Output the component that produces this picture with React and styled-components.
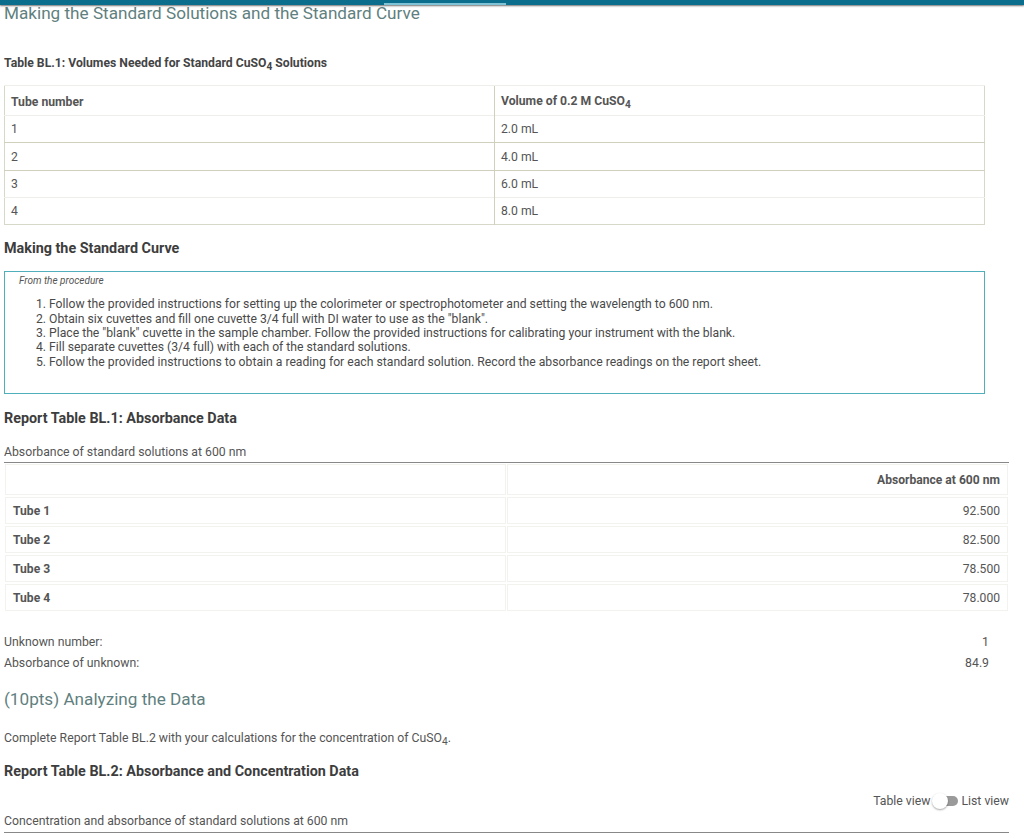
import styled, { createGlobalStyle } from "styled-components";

const GlobalStyle = createGlobalStyle`
  html, body {
    margin: 0;
    padding: 0;
    background: white;
    overflow: hidden;
  }
  body {
    font-family: Roboto, "Liberation Sans", sans-serif;
    font-size: 12px;
    color: #444;
  }
`;

const Page = styled.div`
  position: relative;
  width: 1024px;
  height: 840px;
  overflow: hidden;
  padding: 0 15px 0 4px;
  box-sizing: border-box;
`;

const TopBar = styled.div`
  position: absolute;
  top: 0;
  left: 0;
  width: 100%;
  height: 5px;
  background: #0b6e8c;
  box-shadow: 0 1px 2px rgba(0, 0, 0, 0.55);
`;

const Progress = styled.div`
  position: absolute;
  top: 3px;
  left: 384px;
  width: 122px;
  height: 2px;
  background: #7fc4d6;
`;

const SectionTitle = styled.h2`
  margin: 0;
  padding-top: ${(props) => props.$top}px;
  font-size: 17.15px;
  line-height: 24px;
  font-weight: 400;
  color: #5f7f80;
`;

const Caption = styled.p`
  margin: 30px 0 13px;
  font-size: 12.2px;
  line-height: 16px;
  font-weight: 700;
  color: #444;
`;

const Sub = styled.sub`
  font-size: 83%;
  line-height: 100%;
  vertical-align: -3px;
`;

const RefTable = styled.table`
  width: 981px;
  table-layout: fixed;
  border-collapse: collapse;
  border: 1px solid #d8d8c8;
`;

const RefCell = styled.td`
  height: ${(props) => (props.$header ? 30 : 27.25)}px;
  padding: ${(props) => (props.$header ? "2px" : "0")} 6px 0;
  box-sizing: border-box;
  font-size: 12.2px;
  font-weight: ${(props) => (props.$header ? 700 : 400)};
  color: #555;
  border-left: 1px solid #d0d0bc;
  border-top: 1px solid ${(props) => (props.$strong ? "#d0d0bc" : "#eeeeea")};
  &:first-child {
    width: 490px;
    border-left: none;
  }
`;

const Heading = styled.h3`
  margin: ${(props) => props.$top}px 0 0;
  font-size: 14.35px;
  line-height: 18px;
  font-weight: 700;
  color: #3d3d3d;
`;

const ProcedureBox = styled.div`
  width: 981px;
  height: 123px;
  margin-top: 13px;
  padding: 2px 14px 0;
  box-sizing: border-box;
  border: 1px solid #4fb0bb;
`;

const BoxLabel = styled.div`
  font-size: 10px;
  line-height: 14px;
  font-style: italic;
  color: #555;
`;

const Steps = styled.ol`
  margin: 9px 0 0;
  padding-left: 30px;
  font-size: 12.2px;
  line-height: 14.4px;
  color: #4a4a4a;
`;

const TableTitle = styled.div`
  margin-top: ${(props) => props.$top}px;
  padding-bottom: ${(props) => props.$bottom}px;
  font-size: 12.25px;
  line-height: 16px;
  color: #555;
  border-bottom: 1px solid #888;
`;

const DataTable = styled.table`
  width: 1005px;
  margin-top: -1px;
  table-layout: fixed;
  border-collapse: separate;
  border-spacing: 1px 2px;
`;

const DataCell = styled.td`
  height: ${(props) => (props.$header ? 31 : 27)}px;
  padding: 0 7px;
  box-sizing: border-box;
  font-size: 12.1px;
  font-weight: ${(props) => (props.$bold ? 700 : 400)};
  text-align: ${(props) => (props.$right ? "right" : "left")};
  color: #555;
  border: 1px solid #f2f2ee;
  &:first-child {
    width: 501px;
  }
`;

const InfoRow = styled.div`
  display: flex;
  justify-content: space-between;
  width: 985px;
  font-size: 12.25px;
  line-height: 21px;
  color: #555;
`;

const InfoList = styled.div`
  margin-top: 19px;
`;

const Intro = styled.p`
  margin: 19px 0 0;
  font-size: 12.25px;
  line-height: 16px;
  color: #555;
`;

const ViewToggle = styled.div`
  display: flex;
  justify-content: flex-end;
  align-items: center;
  height: 16px;
  margin-top: 12px;
  font-size: 12.25px;
  color: #555;
`;

const Track = styled.span`
  position: relative;
  display: inline-block;
  width: 22px;
  height: 10px;
  margin: 0 3px 0 6px;
  border-radius: 5px;
  background: #9a9a9a;
`;

const Knob = styled.span`
  position: absolute;
  top: -3px;
  left: -4px;
  width: 16px;
  height: 16px;
  border-radius: 50%;
  background: white;
  box-shadow: 0 1px 2px rgba(0, 0, 0, 0.35);
`;

const steps = [
  "Follow the provided instructions for setting up the colorimeter or spectrophotometer and setting the wavelength to 600 nm.",
  'Obtain six cuvettes and fill one cuvette 3/4 full with DI water to use as the "blank".',
  'Place the "blank" cuvette in the sample chamber. Follow the provided instructions for calibrating your instrument with the blank.',
  "Fill separate cuvettes (3/4 full) with each of the standard solutions.",
  "Follow the provided instructions to obtain a reading for each standard solution. Record the absorbance readings on the report sheet.",
];

const volumes = [
  ["1", "2.0 mL", false],
  ["2", "4.0 mL", true],
  ["3", "6.0 mL", true],
  ["4", "8.0 mL", false],
];

const readings = [
  ["Tube 1", "92.500"],
  ["Tube 2", "82.500"],
  ["Tube 3", "78.500"],
  ["Tube 4", "78.000"],
];

export default function App() {
  return (
    <Page>
      <GlobalStyle />
      <SectionTitle $top={1}>Making the Standard Solutions and the Standard Curve</SectionTitle>
      <Caption>
        Table BL.1: Volumes Needed for Standard CuSO<Sub>4</Sub> Solutions
      </Caption>
      <RefTable>
        <tbody>
          <tr>
            <RefCell $header>Tube number</RefCell>
            <RefCell $header>
              Volume of 0.2 M CuSO<Sub>4</Sub>
            </RefCell>
          </tr>
          {volumes.map(([tube, volume, strong]) => (
            <tr key={tube}>
              <RefCell $strong={strong}>{tube}</RefCell>
              <RefCell $strong={strong}>{volume}</RefCell>
            </tr>
          ))}
        </tbody>
      </RefTable>

      <Heading $top={15}>Making the Standard Curve</Heading>
      <ProcedureBox>
        <BoxLabel>From the procedure</BoxLabel>
        <Steps>
          {steps.map((step) => (
            <li key={step}>{step}</li>
          ))}
        </Steps>
      </ProcedureBox>

      <Heading $top={16}>Report Table BL.1: Absorbance Data</Heading>
      <TableTitle $top={16} $bottom={2}>
        Absorbance of standard solutions at 600 nm
      </TableTitle>
      <DataTable>
        <tbody>
          <tr>
            <DataCell $header></DataCell>
            <DataCell $header $bold $right>
              Absorbance at 600 nm
            </DataCell>
          </tr>
          {readings.map(([tube, value]) => (
            <tr key={tube}>
              <DataCell $bold>{tube}</DataCell>
              <DataCell $right>{value}</DataCell>
            </tr>
          ))}
        </tbody>
      </DataTable>

      <InfoList>
        <InfoRow>
          <span>Unknown number:</span>
          <span>1</span>
        </InfoRow>
        <InfoRow>
          <span>Absorbance of unknown:</span>
          <span>84.9</span>
        </InfoRow>
      </InfoList>

      <SectionTitle $top={13}>(10pts) Analyzing the Data</SectionTitle>
      <Intro>
        Complete Report Table BL.2 with your calculations for the concentration of CuSO<Sub>4</Sub>.
      </Intro>
      <Heading $top={16}>Report Table BL.2: Absorbance and Concentration Data</Heading>

      <ViewToggle>
        Table view
        <Track>
          <Knob />
        </Track>
        List view
      </ViewToggle>
      <TableTitle $top={4} $bottom={3}>
        Concentration and absorbance of standard solutions at 600 nm
      </TableTitle>

      <TopBar>
        <Progress />
      </TopBar>
    </Page>
  );
}
